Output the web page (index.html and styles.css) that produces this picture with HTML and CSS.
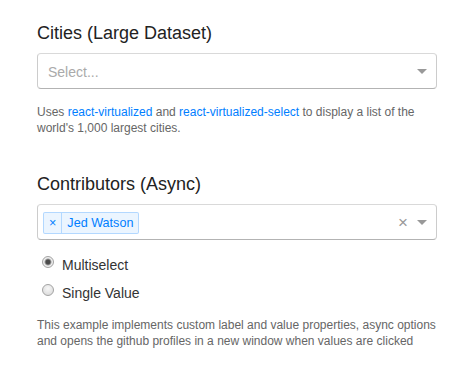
FILE: index.html
```html
<!DOCTYPE html>
<html>
<head>
	<meta charset="utf-8" />
	<title>React Select</title>
	<link rel="stylesheet" href="styles.css">
</head>
<body>
	<div class="page">
		<div class="section">
			<h3 class="section-heading">Cities (Large Dataset)</h3>
			<div class="select-control">
				<div class="select-value">
					<span class="select-placeholder">Select...</span>
				</div>
				<span class="select-arrow-zone"><span class="select-arrow"></span></span>
			</div>
			<div class="hint">Uses <a href="#">react-virtualized</a> and <a href="#">react-virtualized-select</a> to display a list of the world's 1,000 largest cities.</div>
		</div>
		<div class="section">
			<h3 class="section-heading">Contributors (Async)</h3>
			<div class="select-control">
				<div class="select-value">
					<div class="value-tag">
						<span class="value-icon">&times;</span><span class="value-label">Jed Watson</span>
					</div>
				</div>
				<span class="select-clear">&times;</span>
				<span class="select-arrow-zone"><span class="select-arrow"></span></span>
			</div>
			<div class="radio-list">
				<label class="radio-row"><span class="radio checked"></span>Multiselect</label>
				<label class="radio-row"><span class="radio"></span>Single Value</label>
			</div>
			<div class="hint">This example implements custom label and value properties, async options and opens the github profiles in a new window when values are clicked</div>
		</div>
	</div>
</body>
</html>
```

FILE: styles.css
```css
body {
	margin: 0;
	font: 14px "Liberation Sans", Arial, sans-serif;
	color: #333;
	background: #fff;
}

.page {
	width: 400px;
	padding: 23px 0 0 37px;
}

.section-heading {
	font-size: 18px;
	font-weight: normal;
	line-height: 20px;
	color: #222;
	margin: 0 0 10px 0;
}

.section + .section {
	margin-top: 38px;
}

.select-control {
	box-sizing: border-box;
	display: flex;
	align-items: center;
	height: 36px;
	border: 1px solid #ccc;
	border-color: #d9d9d9 #ccc #b3b3b3;
	border-radius: 4px;
	background: #fff;
}

.select-value {
	flex: 1;
	display: flex;
	align-items: center;
	height: 100%;
	padding-left: 10px;
}

.select-placeholder {
	color: #aaa;
	margin-top: 1px;
}

.select-value .value-tag {
	margin-left: -5px;
	margin-top: 1px;
}

.value-tag {
	display: flex;
	font-size: 12.6px;
	line-height: 18px;
	color: #007eff;
	background: rgba(0, 126, 255, 0.08);
	border: 1px solid rgba(0, 126, 255, 0.24);
	border-radius: 2px;
}

.value-icon {
	padding: 1px 5px;
	border-right: 1px solid rgba(0, 126, 255, 0.24);
}

.value-label {
	padding: 1px 5px;
}

.select-clear {
	color: #999;
	font-size: 17px;
	line-height: 1;
	margin-right: 9px;
	margin-top: 1px;
}

.select-arrow-zone {
	display: flex;
	align-items: center;
	padding-right: 9px;
}

.select-arrow {
	width: 0;
	height: 0;
	border-style: solid;
	border-width: 5px 5px 0;
	border-color: #999 transparent transparent;
	margin-top: 1px;
}

.hint {
	font-size: 12px;
	line-height: 16px;
	color: #666;
	margin-top: 15px;
}

.hint a {
	color: #007eff;
	text-decoration: none;
}

.radio-list {
	margin-top: 11px;
}

.radio-row {
	display: flex;
	align-items: center;
	height: 28px;
	color: #333;
}

.radio {
	box-sizing: border-box;
	width: 12px;
	height: 12px;
	margin: 0 8px 6px 5px;
	border: 1px solid #a3a3a3;
	border-radius: 50%;
	background: radial-gradient(circle at 50% 35%, #f7f7f7, #d6d6d6);
}

.radio.checked {
	background: radial-gradient(circle, #4a4a4a 0, #4a4a4a 2px, #9a9a9a 3px, #f2f2f2 4px, #e2e2e2 6px);
}

.section:last-child .hint {
	margin-top: 10px;
}
```
